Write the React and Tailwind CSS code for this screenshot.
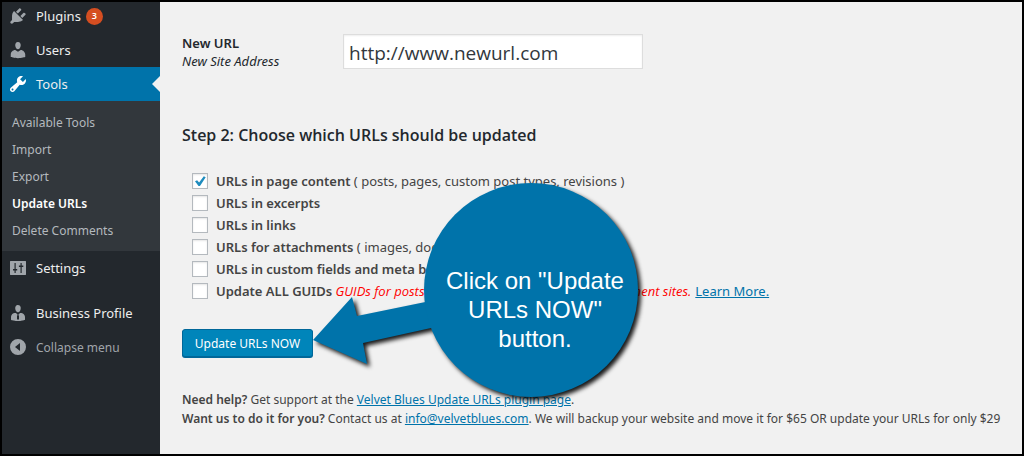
import { useState } from 'react';
import clsx from 'clsx';

const menuIcons = {
  plugins:
    'M13.11 4.36L9.87 7.6 8 5.73l3.24-3.24c.35-.34 1.05-.2 1.56.32.52.51.66 1.21.31 1.55zm-8 1.77l.91-1.12 9.01 9.01-1.19.84c-.71.71-2.63 1.16-3.82 1.16H6.14L4.9 17.26c-.59.59-1.54.59-2.12 0-.59-.58-.59-1.53 0-2.12l1.24-1.24v-3.88c0-1.13.4-3.19 1.09-3.89zm7.26 3.97l3.24-3.24c.34-.35 1.04-.21 1.55.31.52.51.66 1.21.31 1.55l-3.24 3.25z',
  users:
    'M10 9.25c-2.27 0-2.73-3.44-2.73-3.44C7 4.02 7.82 2 9.97 2c2.16 0 2.98 2.02 2.71 3.81 0 0-.41 3.44-2.68 3.44zm0 2.57L12.72 10c2.39 0 4.52 2.33 4.52 4.53v2.49s-3.65 1.13-7.24 1.13c-3.65 0-7.24-1.13-7.24-1.13v-2.49c0-2.25 1.94-4.48 4.47-4.48z',
  tools:
    'M16.68 9.77c-1.34 1.34-3.3 1.67-4.95.99l-5.41 6.52c-.99.99-2.59.99-3.58 0s-.99-2.59 0-3.57l6.52-5.42c-.68-1.65-.35-3.61.99-4.95 1.28-1.28 3.12-1.62 4.72-1.06l-2.89 2.89 2.82 2.82 2.86-2.87c.53 1.58.18 3.39-1.08 4.65zM3.81 16.21c.4.39 1.04.39 1.43 0 .4-.4.4-1.04 0-1.43-.39-.4-1.03-.4-1.43 0-.39.39-.39 1.03 0 1.43z',
  settings:
    'M2.500 3h15c.3 0 .5.2.5.5v13c0 .3-.2.5-.5.5h-15c-.3 0-.5-.2-.5-.5v-13c0-.3.2-.5.5-.5zM6.500 5v6H5v1.500h1.500V15h1.200v-2.500h1.500V11H7.700V5zM12.500 15h1.200V9h1.600V7.500h-1.600V5h-1.200v2.500h-1.600V9h1.600z',
  profile:
    'M7.3 6l-.03-.19c-.04-.37-.05-.73-.03-1.08.02-.36.1-.71.25-1.04.14-.32.31-.61.52-.86s.49-.46.83-.6c.34-.15.72-.23 1.13-.23.69 0 1.26.2 1.71.59s.76.87.91 1.44.18 1.16.09 1.78l-.03.19c-.01.09-.05.25-.11.48-.05.24-.12.47-.2.69-.08.21-.19.45-.34.72-.14.27-.3.49-.47.69-.18.19-.4.34-.67.48-.27.13-.55.19-.86.19s-.59-.06-.87-.19c-.26-.13-.49-.29-.67-.5-.18-.2-.34-.42-.49-.66-.15-.25-.26-.49-.34-.73-.09-.25-.16-.47-.21-.67-.06-.21-.1-.37-.12-.5zm9.2 6.24c.41.7.5 1.41.5 2.14v2.49c0 .03-.12.08-.29.13-.18.04-.42.13-.97.27-.55.12-1.1.24-1.65.34s-1.19.19-1.95.27c-.75.08-1.46.12-2.13.12-.68 0-1.39-.04-2.14-.12-.75-.07-1.4-.17-1.98-.27-.58-.11-1.08-.23-1.56-.34-.49-.11-.8-.21-1.06-.29L3 16.87v-2.49c0-.75.07-1.46.46-2.15s.81-1.25 1.5-1.68C5.66 10.12 7.19 10 8 10l1.67 1.67L9 13v3l1.02 1.08L11 16v-3l-.68-1.33L11.97 10c.77 0 2.2.07 2.9.52.71.45 1.21 1.02 1.63 1.72z',
  collapse:
    'M10 2a8 8 0 1 1 0 16 8 8 0 0 1 0-16zM12 6l-5 4 5 4z',
};

const subMenus = [
  'Available Tools',
  'Import',
  'Export',
  'Update URLs',
  'Delete Comments',
];

const options = [
  {
    id: 'content',
    label: 'URLs in page content',
    note: '( posts, pages, custom post types, revisions )',
  },
  { id: 'excerpts', label: 'URLs in excerpts' },
  { id: 'links', label: 'URLs in links' },
  {
    id: 'attachments',
    label: 'URLs for attachments',
    note: '( images, documents, general media )',
  },
  { id: 'custom', label: 'URLs in custom fields and meta boxes' },
  {
    id: 'guids',
    label: 'Update ALL GUIDs',
    warning: 'GUIDs for posts should only be changed on development sites.',
  },
];

function MenuIcon({ name }) {
  return (
    <svg viewBox="0 0 20 20" className="size-5 shrink-0" aria-hidden="true">
      <path fill="currentColor" fillRule="evenodd" d={menuIcons[name]} />
    </svg>
  );
}

function MenuItem({ icon, label, active, badge }) {
  return (
    <a
      href="#"
      className={clsx(
        'flex h-[34px] items-center gap-2 pl-[6px] text-[13px]',
        active ? 'bg-[#0073aa] text-white' : 'text-[#a0a5aa]'
      )}
    >
      <MenuIcon name={icon} />
      <span className="pt-0.5 text-[#eee]">{label}</span>
      {badge && (
        <span className="-ml-[3px] flex size-[17px] items-center justify-center rounded-full bg-[#d54e21] text-[9px] font-semibold text-white">
          {badge}
        </span>
      )}
      {active && (
        <svg viewBox="0 0 8 16" className="ml-auto h-4 w-2" aria-hidden="true">
          <path d="M8 0v16L0 8z" fill="#f1f1f1" />
        </svg>
      )}
    </a>
  );
}

function Sidebar() {
  return (
    <nav className="w-[158px] shrink-0 overflow-hidden bg-[#23282d]">
      <div className="-mt-[3px]">
        <MenuItem icon="plugins" label="Plugins" badge="3" />
        <MenuItem icon="users" label="Users" />
        <MenuItem icon="tools" label="Tools" active />
      </div>

      <ul className="bg-[#32373c] pt-2 pb-[7px]">
        {subMenus.map((name) => (
          <li key={name}>
            <a
              href="#"
              className={clsx(
                'flex h-[27px] items-center pl-[10px] text-xs',
                name === 'Update URLs'
                  ? 'font-semibold text-white'
                  : 'text-[#b4b9be]'
              )}
            >
              {name}
            </a>
          </li>
        ))}
      </ul>

      <MenuItem icon="settings" label="Settings" />
      <div className="pt-[11px]">
        <MenuItem icon="profile" label="Business Profile" />
      </div>
      <button
        type="button"
        className="flex h-[34px] items-center gap-2 pl-[6px] text-xs text-[#a0a5aa]"
      >
        <MenuIcon name="collapse" />
        <span className="pt-0.5">Collapse menu</span>
      </button>
    </nav>
  );
}

function OptionRow({ option, checked, onChange }) {
  return (
    <li className="flex h-[22px] items-center gap-1 whitespace-nowrap">
      <label className="flex items-center gap-2">
        <span className="grid size-4 place-items-center">
          <input
            type="checkbox"
            checked={checked}
            onChange={onChange}
            className="peer col-start-1 row-start-1 size-4 appearance-none border border-[#b4b9be] bg-white shadow-[inset_0_1px_2px_rgba(0,0,0,0.1)]"
          />
          <svg
            viewBox="0 0 16 16"
            className="pointer-events-none invisible col-start-1 row-start-1 size-4 peer-checked:visible"
            aria-hidden="true"
          >
            <path
              d="M3 8.300l2.100-1 2 2.300L11.800 3.300l1.900.9L8 13H6.500z"
              fill="#1e8cbe"
            />
          </svg>
        </span>
        <span className="pt-0.5">
          <strong className="font-semibold">{option.label}</strong>
          {option.note && ` ${option.note}`}
          {option.warning && (
            <em className="font-['Open_Sans',sans-serif] text-[#f00]">
              {' '}
              {option.warning}
            </em>
          )}
        </span>
      </label>
      {option.warning && (
        <a href="#" className="pt-0.5 text-[#0073aa] underline">
          Learn More.
        </a>
      )}
    </li>
  );
}

// round bubble with an arrow pointing at the button
function Callout() {
  return (
    <div className="pointer-events-none absolute -top-[147px] left-[130px] h-[230px] w-[345px]">
      <svg
        viewBox="312 182 345 230"
        className="h-[230px] w-[345px] drop-shadow-[3px_3px_2px_rgba(0,0,0,0.9)]"
        aria-hidden="true"
      >
        <path
          d="M313 340L352 297L357 316L440 299V326L363 343L367 364z"
          fill="#0073aa"
        />
        <circle cx="531" cy="290" r="107" fill="#0073aa" />
      </svg>
      <p className="absolute top-[84px] left-[123px] w-[200px] text-center font-['Liberation_Sans',Arial,sans-serif] text-2xl leading-[29px] text-white">
        Click on "Update
        <br />
        URLs NOW"
        <br />
        button.
      </p>
    </div>
  );
}

export default function App() {
  const [newUrl, setNewUrl] = useState('http://www.newurl.com');
  const [checked, setChecked] = useState(['content']);

  const toggle = (id) => {
    setChecked((prev) =>
      prev.includes(id) ? prev.filter((v) => v !== id) : [...prev, id]
    );
  };

  return (
    <div className="flex min-h-screen border-2 border-black bg-[#f1f1f1] font-['Noto_Sans','Open_Sans',sans-serif] text-[13px] text-[#444]">
      <Sidebar />

      <main className="min-w-0 flex-1 overflow-hidden pt-8 pl-[22px]">
        <div className="flex">
          <label
            htmlFor="new-url"
            className="w-[161px] text-[#23282d] leading-[18px]"
          >
            <span className="block font-semibold">New URL</span>
            <em>New Site Address</em>
          </label>
          <input
            id="new-url"
            type="text"
            value={newUrl}
            onChange={(e) => setNewUrl(e.target.value)}
            className="h-[35px] w-[300px] border border-[#ddd] bg-white px-[5px] pt-0.5 font-['Open_Sans',sans-serif] text-[19px] text-[#32373c] shadow-[inset_0_1px_2px_rgba(0,0,0,0.07)]"
          />
        </div>

        <h2 className="mt-[53px] font-['Open_Sans',sans-serif] text-base leading-6 font-semibold text-[#23282d]">
          Step 2: Choose which URLs should be updated
        </h2>
        <ul className="mt-[23px] pl-[10px]">
          {options.map((option) => (
            <OptionRow
              key={option.id}
              option={option}
              checked={checked.includes(option.id)}
              onChange={() => toggle(option.id)}
            />
          ))}
        </ul>

        <div className="relative mt-[27px]">
          <button
            type="button"
            className="block h-[28px] w-[131px] rounded-[3px] border border-[#006799] bg-[#0085ba] pt-px text-xs text-white shadow-[0_1px_0_#006799]"
          >
            Update URLs NOW
          </button>
          <Callout />
        </div>

        <div className="mt-[33px] text-xs leading-[19px] whitespace-nowrap">
          <p>
            <strong className="font-semibold">Need help?</strong> Get support at
            the{' '}
            <a href="#" className="text-[#0073aa] underline">
              Velvet Blues Update URLs plugin page
            </a>
            .
          </p>
          <p>
            <strong className="font-semibold">
              Want us to do it for you?
            </strong>{' '}
            Contact us at{' '}
            <a href="#" className="text-[#0073aa] underline">
              info@velvetblues.com
            </a>
            . We will backup your website and move it for $65 OR update your
            URLs for only $29
          </p>
        </div>
      </main>
    </div>
  );
}
